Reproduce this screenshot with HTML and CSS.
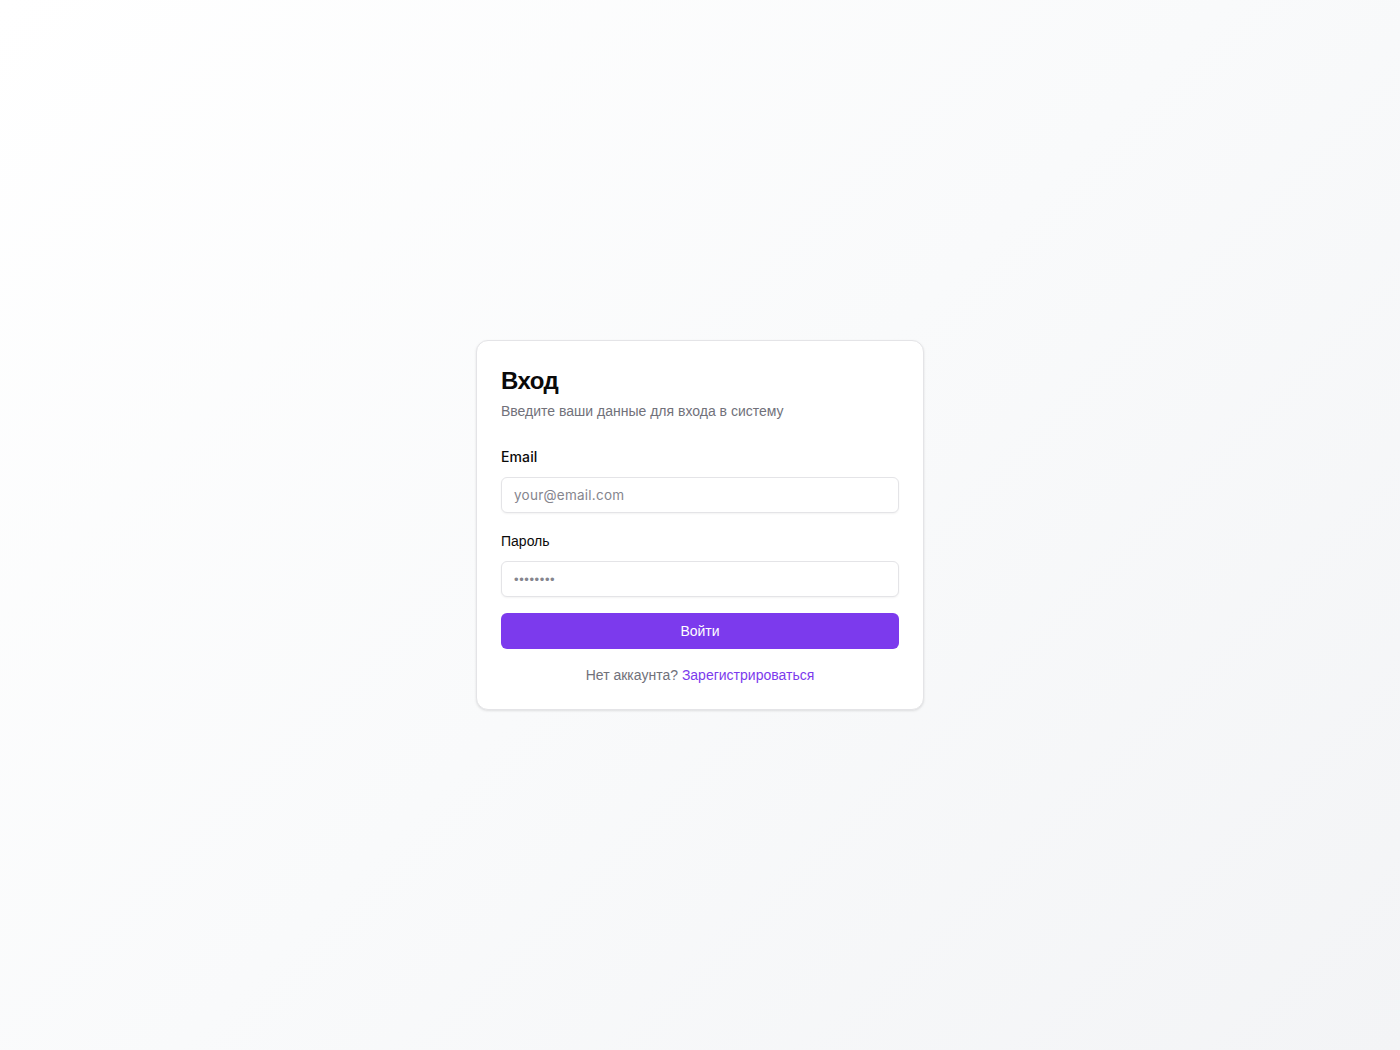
FILE: index.html
```html
<!DOCTYPE html>
<html lang="ru">
<head>
<meta charset="utf-8">
<title>Вход</title>
<link rel="stylesheet" href="styles.css">
</head>
<body>
<main class="page">
  <form class="card">
    <h1 class="title">Вход</h1>
    <p class="subtitle">Введите ваши данные для входа в систему</p>
    <label class="label latin label-first" for="email">Email</label>
    <input class="input latin" id="email" type="email" placeholder="your@email.com">
    <label class="label label-next" for="password">Пароль</label>
    <input class="input password" id="password" type="password" placeholder="••••••••">
    <button class="button" type="button">Войти</button>
    <p class="footer">Нет аккаунта? <a class="link" href="#">Зарегистрироваться</a></p>
  </form>
</main>
</body>
</html>
```
FILE: styles.css
```css
* { box-sizing: border-box; }
html, body { margin: 0; padding: 0; height: 100%; }
body {
  font-family: "Liberation Sans", Arial, sans-serif;
  color: #0a0a0a;
  background: linear-gradient(135deg, #ffffff 0%, #f9fafb 50%, #f3f4f6 100%);
}
.page {
  min-height: 100vh;
  display: flex;
  align-items: center;
  justify-content: center;
}
.card {
  width: 448px;
  background: #ffffff;
  border: 1px solid #e4e4e7;
  border-radius: 12px;
  box-shadow: 0 1px 3px rgba(0,0,0,0.08), 0 1px 2px rgba(0,0,0,0.04);
  padding: 24px;
  display: flex;
  flex-direction: column;
}
.latin { font-family: Inter, "Liberation Sans", sans-serif; }
.title {
  margin: 0;
  font-size: 24px;
  line-height: 32px;
  font-weight: 700;
  letter-spacing: -0.5px;
}
.subtitle {
  margin: 4px 0 0;
  font-size: 14px;
  line-height: 20px;
  color: #71717a;
}
.label {
  font-size: 14px;
  line-height: 20px;
  font-weight: 400;
  color: #0a0a0a;
}
.label.latin { font-weight: 450; letter-spacing: 0.1px; }
.label-first { margin-top: 26px; }
.label-next { margin-top: 18px; }
.input {
  margin-top: 10px;
  height: 36px;
  width: 100%;
  border: 1px solid #e4e4e7;
  border-radius: 6px;
  padding: 0 12px;
  font-size: 13px;
  background: #fff;
  box-shadow: 0 1px 2px rgba(0,0,0,0.05);
  outline: none;
}
.input.latin { font-size: 13.5px; letter-spacing: 0.25px; }
.input::placeholder { color: #85858e; }
.input.password { letter-spacing: 0.6px; }
.button {
  margin-top: 16px;
  height: 36px;
  width: 100%;
  border: none;
  border-radius: 6px;
  background: #7c3aed;
  color: #ffffff;
  font-family: "Liberation Sans", Arial, sans-serif;
  font-size: 14px;
  cursor: pointer;
}
.footer {
  margin: 16px 0 0;
  text-align: center;
  font-size: 14px;
  line-height: 20px;
  color: #71717a;
}
.link { color: #7c3aed; text-decoration: none; }
```
